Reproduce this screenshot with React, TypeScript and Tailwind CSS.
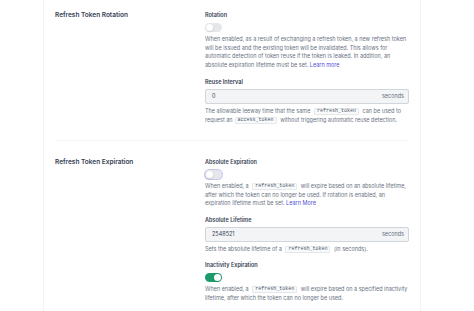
const font = { fontFamily: 'Inter, "Liberation Sans", sans-serif' }

function Code({ children }: { children: string }) {
    return (
        <code className="mx-[2px] inline-block rounded-[1px] border border-gray-200 bg-gray-50 px-[2px] align-middle font-['Liberation_Mono',monospace] text-[5px] leading-[5px] text-gray-600">
            {children}
        </code>
    )
}

function Toggle({ on, ring }: { on?: boolean; ring?: boolean }) {
    return (
        <div
            className={`mt-[4px] flex h-[9px] w-[17px] items-center rounded-full px-[1px] ${
                on ? 'justify-end bg-[#1e9b6d]' : 'justify-start bg-gray-200'
            } ${ring ? 'ring-1 ring-[#c9c6ee]' : ''}`}
        >
            <div className="h-[7px] w-[7px] rounded-full bg-white shadow-sm" />
        </div>
    )
}

function Label({ children, mt }: { children: string; mt: string }) {
    return <p className={`${mt} text-[5.5px] font-semibold leading-[8px] text-gray-700`}>{children}</p>
}

function Help({ children }: { children: React.ReactNode }) {
    return <p className="mt-[3px] text-[5.5px] leading-[8.5px] text-gray-500">{children}</p>
}

function Input({ value }: { value: string }) {
    return (
        <div className="mt-[3px] flex h-[15px] items-center justify-between rounded-[2px] border border-gray-300 bg-gray-100 pl-[6px] pr-[4px] text-[5.5px] text-gray-700">
            <span>{value}</span>
            <span className="text-gray-500">seconds</span>
        </div>
    )
}

export default function App() {
    return (
        <div className="h-[311px] w-[474px] overflow-hidden bg-white" style={font}>
            <div className="ml-[43px] h-full w-[378px] border-x border-gray-100 px-[11px]">
                {/* Rotation */}
                <div className="flex border-b border-gray-100 pb-[16px] pt-[11px]">
                    <div className="w-[150px]">
                        <h3 className="text-[6.5px] font-semibold leading-[9px] text-gray-700">Refresh Token Rotation</h3>
                    </div>
                    <div className="w-[204px]">
                        <Label mt="mt-0">Rotation</Label>
                        <Toggle />
                        <Help>
                            When enabled, as a result of exchanging a refresh token, a new refresh token will be issued and
                            the existing token will be invalidated. This allows for automatic detection of token reuse if
                            the token is leaked. In addition, an absolute expiration lifetime must be set.{' '}
                            <a className="text-[#4f4fd6]">Learn more</a>
                        </Help>
                        <Label mt="mt-[9px]">Reuse Interval</Label>
                        <Input value="0" />
                        <Help>
                            The allowable leeway time that the same <Code>refresh_token</Code> can be used to request an
                            <Code>access_token</Code> without triggering automatic reuse detection.
                        </Help>
                    </div>
                </div>

                {/* Expiration */}
                <div className="flex pt-[17px]">
                    <div className="w-[150px]">
                        <h3 className="text-[6.5px] font-semibold leading-[9px] text-gray-700">Refresh Token Expiration</h3>
                    </div>
                    <div className="w-[204px]">
                        <Label mt="mt-0">Absolute Expiration</Label>
                        <Toggle ring />
                        <Help>
                            When enabled, a <Code>refresh_token</Code> will expire based on an absolute lifetime, after
                            which the token can no longer be used. If rotation is enabled, an expiration lifetime must be
                            set. <a className="text-[#4f4fd6]">Learn More</a>
                        </Help>
                        <Label mt="mt-[8px]">Absolute Lifetime</Label>
                        <Input value="2548521" />
                        <Help>
                            Sets the absolute lifetime of a <Code>refresh_token</Code> (in seconds).
                        </Help>
                        <Label mt="mt-[8px]">Inactivity Expiration</Label>
                        <Toggle on />
                        <Help>
                            When enabled, a <Code>refresh_token</Code> will expire based on a specified inactivity
                            lifetime, after which the token can no longer be used.
                        </Help>
                    </div>
                </div>
            </div>
        </div>
    )
}
